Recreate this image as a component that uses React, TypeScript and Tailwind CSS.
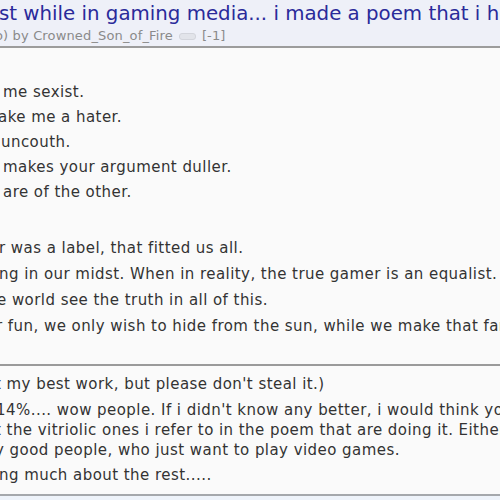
import React from 'react'

const Line = ({ children, className = '' }: { children: React.ReactNode; className?: string }) => (
    <div className={`whitespace-nowrap ${className}`}>{children}</div>
)

const App = () => {
    return (
        <div className="w-[500px] h-[500px] overflow-hidden bg-[#fafafa] font-['DejaVu_Sans',sans-serif] flex flex-col">
            <div className="bg-[#eef0f8] h-[48px] border-b-2 border-[#9c9c9c] flex flex-col pt-[2px]">
                <Line className="text-[19.8px] leading-[23px] text-[#2a2a9a] -ml-[1px]">
                    st while in gaming media... i made a poem that i he
                </Line>
                <div className="flex items-center whitespace-nowrap text-[13px] tracking-[0.15px] leading-[16px] text-[#8a8a8a] mt-[3px] -ml-[5px]">
                    <span>o) by Crowned_Son_of_Fire</span>
                    <span className="inline-block w-[17px] h-[7px] rounded-[3px] bg-[#e2e4ea] border border-[#d3d5dc] mx-[6px]" />
                    <span>[-1]</span>
                </div>
            </div>

            <div className="text-[15px] tracking-[0.45px] text-[#333] leading-[25px] pt-[32px]">
                <Line className="pl-[3px]">me sexist.</Line>
                <Line className="-ml-[2px]">ake me a hater.</Line>
                <Line className="pl-[1px]">uncouth.</Line>
                <Line className="pl-[3px]">makes your argument duller.</Line>
                <Line className="pl-[3px]">are of the other.</Line>

                <div className="leading-[26px] mt-[30px]">
                    <Line className="-ml-[1px]">r was a label, that fitted us all.</Line>
                    <Line className="-ml-[1px]">ng in our midst. When in reality, the true gamer is an equalist.</Line>
                    <Line className="-ml-[3px]">e world see the truth in all of this.</Line>
                    <Line className="-ml-[4px]">r fun, we only wish to hide from the sun, while we make that fame</Line>
                </div>
            </div>

            <div className="mt-[25px] border-t-2 border-[#9a9a9a] flex-1 flex flex-col">
                <div className="text-[15px] tracking-[0.45px] text-[#333] pt-[6px]">
                    <Line className="leading-[24px] -ml-[5px]">t my best work, but please don't steal it.)</Line>
                    <div className="leading-[20px] mt-[4px]">
                        <Line className="-ml-[4px]">14%.... wow people. If i didn't know any better, i would think you</Line>
                        <Line className="-ml-[5px]">t the vitriolic ones i refer to in the poem that are doing it. Either</Line>
                        <Line className="-ml-[5px]">y good people, who just want to play video games.</Line>
                    </div>
                    <Line className="leading-[24px] mt-[3px] -ml-[1px]">ng much about the rest.....</Line>
                </div>
                <div className="mt-auto border-t-2 border-[#a5a8ac] bg-[#eef3fa] h-[6px]" />
            </div>
        </div>
    )
}

export default App
